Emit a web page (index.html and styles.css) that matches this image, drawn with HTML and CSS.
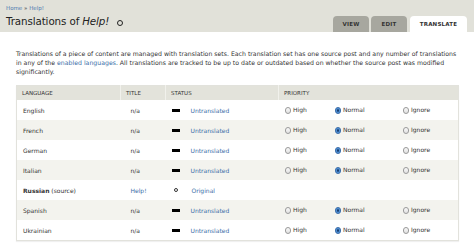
FILE: index.html
```html
<!DOCTYPE html>
<html>
<head>
<meta charset="utf-8">
<link rel="stylesheet" href="styles.css">
</head>
<body>
<header class="top">
  <div class="titles">
    <div class="crumb"><a href="#">Home</a> » <a href="#">Help!</a></div>
    <h1>Translations of <em>Help!</em><span class="ring"></span></h1>
  </div>
  <nav class="tabs">
    <a class="tab" href="#">VIEW</a>
    <a class="tab" href="#">EDIT</a>
    <a class="tab active" href="#">TRANSLATE</a>
  </nav>
</header>
<main class="content">
  <p class="intro"><span class="line">Translations of a piece of content are managed with translation sets. Each translation set has one source post and any number of translations</span><span class="line"><span>in any of the </span><a href="#">enabled languages</a><span>. All translations are tracked to be up to date or outdated based on whether the source post was modified</span></span><span class="line">significantly.</span></p>
  <table class="tr">
    <colgroup>
      <col class="c-lang"><col class="c-title"><col class="c-status"><col class="c-p1"><col class="c-p2"><col class="c-p3">
    </colgroup>
    <thead>
      <tr><th>LANGUAGE</th><th>TITLE</th><th>STATUS</th><th colspan="3">PRIORITY</th></tr>
    </thead>
    <tbody>
      <tr><td>English</td><td>n/a</td><td><span class="bar"></span><a href="#">Untranslated</a></td><td><span class="radio"></span>High</td><td><span class="radio on"></span>Normal</td><td><span class="radio"></span>Ignore</td></tr>
      <tr><td>French</td><td>n/a</td><td><span class="bar"></span><a href="#">Untranslated</a></td><td><span class="radio"></span>High</td><td><span class="radio on"></span>Normal</td><td><span class="radio"></span>Ignore</td></tr>
      <tr><td>German</td><td>n/a</td><td><span class="bar"></span><a href="#">Untranslated</a></td><td><span class="radio"></span>High</td><td><span class="radio on"></span>Normal</td><td><span class="radio"></span>Ignore</td></tr>
      <tr><td>Italian</td><td>n/a</td><td><span class="bar"></span><a href="#">Untranslated</a></td><td><span class="radio"></span>High</td><td><span class="radio on"></span>Normal</td><td><span class="radio"></span>Ignore</td></tr>
      <tr><td><strong>Russian</strong> (source)</td><td><a href="#">Help!</a></td><td><span class="dot"></span><a href="#">Original</a></td><td></td><td></td><td></td></tr>
      <tr><td>Spanish</td><td>n/a</td><td><span class="bar"></span><a href="#">Untranslated</a></td><td><span class="radio"></span>High</td><td><span class="radio on"></span>Normal</td><td><span class="radio"></span>Ignore</td></tr>
      <tr><td>Ukrainian</td><td>n/a</td><td><span class="bar"></span><a href="#">Untranslated</a></td><td><span class="radio"></span>High</td><td><span class="radio on"></span>Normal</td><td><span class="radio"></span>Ignore</td></tr>
    </tbody>
  </table>
</main>
</body>
</html>
```
FILE: styles.css
```css
html, body { margin: 0; padding: 0; background: #fff; }
body { font-family: "DejaVu Sans", "Open Sans", sans-serif; color: #333; font-size: 6px; width: 474px; height: 245px; overflow: hidden; }
a { color: #3a6ea8; text-decoration: none; }

.top { background: #e1e1d9; height: 32px; display: flex; justify-content: space-between; align-items: flex-end; padding: 0 7px 0 6px; box-sizing: border-box; }
.titles { align-self: stretch; padding-top: 5px; }
.crumb { font-size: 5.5px; line-height: 7px; color: #555; }
.crumb a { color: #4f7bb0; }
h1 { margin: 3px 0 0; font-size: 10.3px; font-weight: normal; line-height: 13px; color: #222; letter-spacing: -0.1px; display: flex; align-items: center; }
h1 em { margin-left: 3px; }
.ring { width: 4px; height: 4px; border: 1.2px solid #222; border-radius: 50%; margin-left: 8px; margin-top: 2px; }

.tabs { display: flex; gap: 2px; }
.tab { display: block; height: 16px; line-height: 16px; padding: 0; background: #a7a79f; color: #333; font-weight: bold; font-size: 5.5px; text-align: center; border-radius: 4px 4px 0 0; width: 36px; letter-spacing: 0.2px; }
.tab.active { background: #fff; width: 57px; margin-left: 1px; }

.content { padding: 0 16px; }
.intro { margin: 17px 0 9px; font-size: 6.2px; line-height: 9px; color: #333; }
.line { display: block; white-space: nowrap; }

.tr { width: 442px; border-collapse: collapse; table-layout: fixed; border: 1px solid #e2e2dc; box-shadow: 0 1px 1px rgba(0,0,0,0.06); }
.c-lang { width: 104px; } .c-title { width: 45px; } .c-status { width: 113px; }
.c-p1 { width: 50px; } .c-p2 { width: 68px; } .c-p3 { width: 62px; }
th { background: #e3e3db; height: 14px; padding: 0 0 0 5px; text-align: left; font-weight: normal; font-size: 5.5px; color: #333; border-left: 1px solid #f1f1ec; }
th:first-child { border-left: none; }
td { height: 20px; padding: 0 0 0 6px; font-size: 6px; color: #333; white-space: nowrap; }
tbody tr:nth-child(even) td { background: #f3f3ee; }
td:nth-child(2) { padding-left: 10px; }
.bar { display: inline-block; width: 8px; height: 3px; background: #000; vertical-align: middle; margin-right: 11px; margin-top: -1px; }
.dot { display: inline-block; width: 2px; height: 2px; border: 1px solid #333; border-radius: 50%; vertical-align: middle; margin: -1px 14px 0 2px; }
.radio { display: inline-block; width: 4.5px; height: 4.5px; border: 0.8px solid #9a9a9a; border-radius: 50%; vertical-align: middle; margin: -1px 2px 0 0; background: linear-gradient(#fafafa, #e0e0e0); }
.radio.on { background: radial-gradient(circle, #1c3f6e 0 1px, #4d8fd6 1.3px); border-color: #3f6fa8; }
```
